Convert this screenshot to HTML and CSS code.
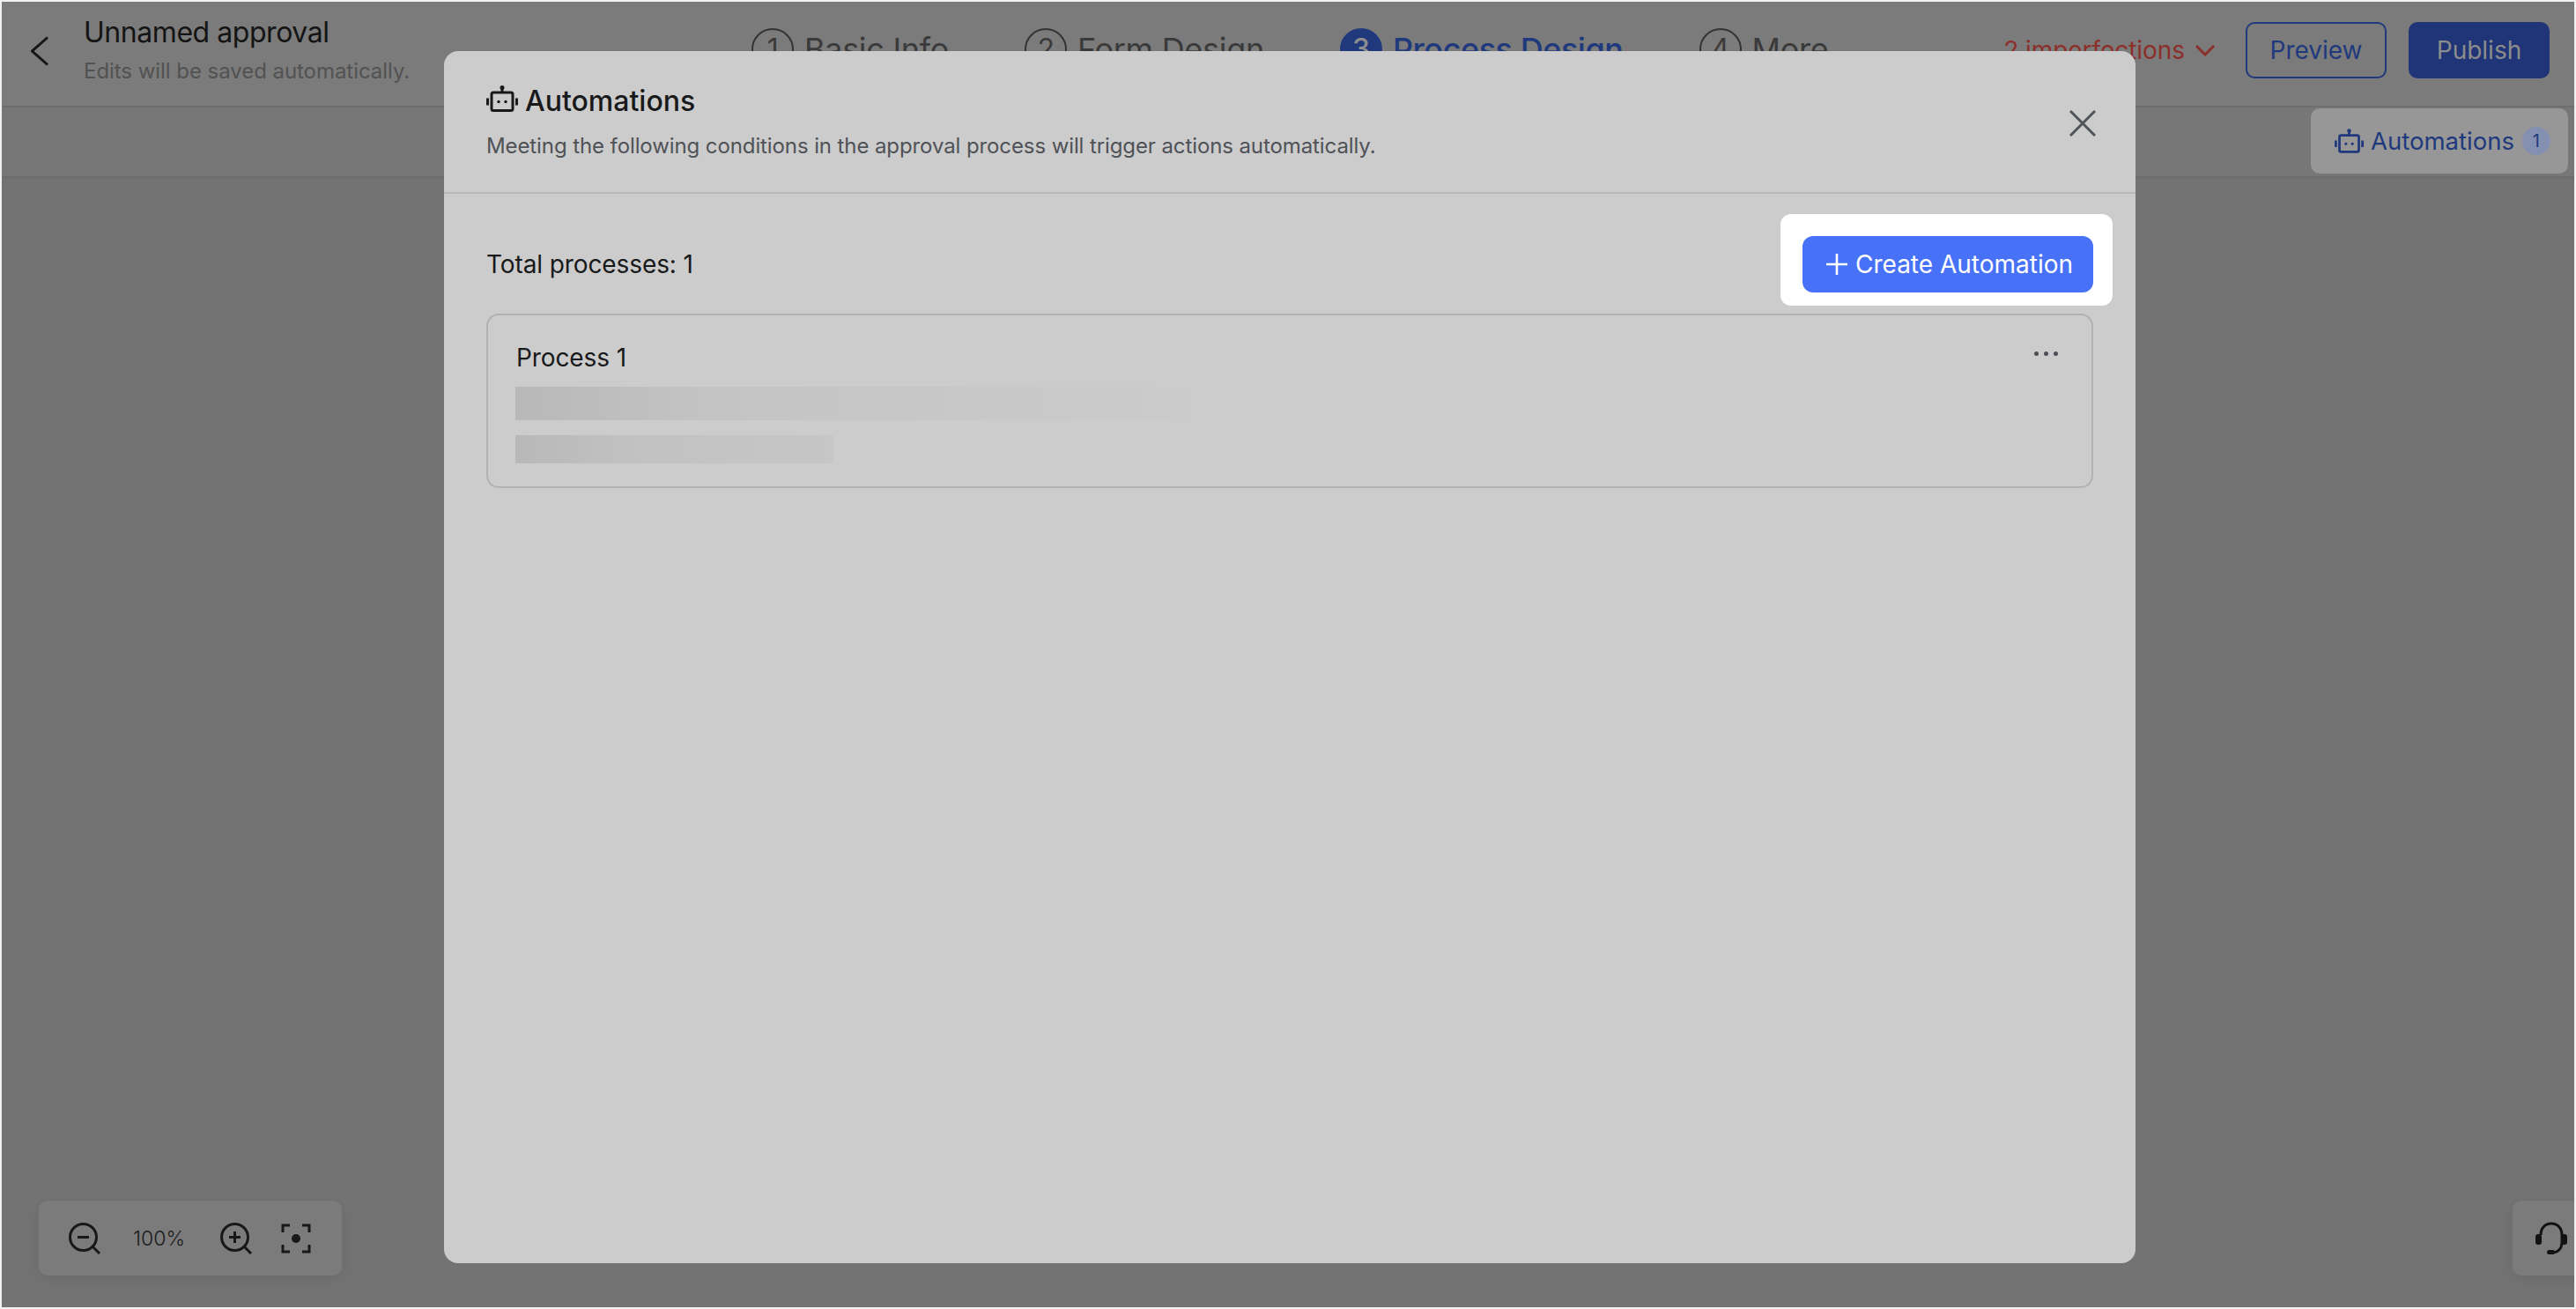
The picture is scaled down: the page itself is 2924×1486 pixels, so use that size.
FILE: index.html
```html
<!DOCTYPE html>
<html lang="en">
<head>
<meta charset="utf-8">
<title>Automations</title>
<link rel="stylesheet" href="styles.css">
</head>
<body>
<div class="app">
  <header class="topbar">
    <div class="topbar-left">
      <svg class="back" viewBox="0 0 20 34" width="20" height="34"><path d="M19 1.500 1.500 17 19 32.500" fill="none" stroke="#151515" stroke-width="3"/></svg>
      <div class="doc">
        <div class="doc-name">Unnamed approval</div>
        <div class="doc-note">Edits will be saved automatically.</div>
      </div>
    </div>
    <nav class="steps">
      <div class="step"><span class="step-num">1</span><span>Basic Info</span></div>
      <div class="step"><span class="step-num">2</span><span>Form Design</span></div>
      <div class="step step-active"><span class="step-num">3</span><span>Process Design</span></div>
      <div class="step"><span class="step-num">4</span><span>More</span></div>
    </nav>
    <div class="topbar-right">
      <div class="issues">2 imperfections
        <svg viewBox="0 0 24 14" width="24" height="14"><path d="M2 2l10 10L22 2" fill="none" stroke="#8c2f2a" stroke-width="3"/></svg>
      </div>
      <button class="btn btn-outline">Preview</button>
      <button class="btn btn-solid">Publish</button>
    </div>
  </header>
  <div class="subbar">
    <div class="auto-chip">
      <svg class="robot" viewBox="0 0 36 30" width="33" height="28"><g fill="none" stroke="#20397d" stroke-width="3"><rect x="6" y="8" width="24" height="20.500" rx="2"/><path d="M18 3v5M1.500 14.500v8M34.500 14.500v8"/></g><g fill="#20397d"><circle cx="18" cy="2.500" r="2.500"/><circle cx="14" cy="18.500" r="1.700"/><circle cx="22" cy="18.500" r="1.700"/></g></svg>
      <span class="auto-chip-label">Automations</span>
      <span class="auto-chip-badge">1</span>
    </div>
  </div>
  <main class="canvas">
    <div class="zoom-panel">
      <svg viewBox="0 0 36 36" width="36" height="36"><g fill="none" stroke="#17181a" stroke-width="3"><circle cx="16.500" cy="16.500" r="15"/><path d="M27 27l8 8M10 16.500h13"/></g></svg>
      <span class="zoom-value">100%</span>
      <svg viewBox="0 0 36 36" width="36" height="36"><g fill="none" stroke="#17181a" stroke-width="3"><circle cx="16.500" cy="16.500" r="15"/><path d="M27 27l8 8M10 16.500h13M16.500 10v13"/></g></svg>
      <svg class="fit" viewBox="0 0 34 34" width="34" height="34"><path d="M10 2H2v8M24 2h8v8M10 32H2v-8M24 32h8v-8" fill="none" stroke="#17181a" stroke-width="3"/><circle cx="17" cy="17" r="5" fill="#17181a"/></svg>
    </div>
    <div class="help-panel">
      <svg viewBox="0 0 36 38" width="36" height="38"><path d="M6 15C6 7 11 2 18 2s12 5 12 13v8c0 8-5 12-11 12" fill="none" stroke="#111213" stroke-width="3"/><rect x="0" y="14" width="7" height="12" rx="3" fill="#111213"/><rect x="29" y="14" width="7" height="12" rx="3" fill="#111213"/><rect x="13" y="32" width="9" height="5" rx="2.500" fill="#111213"/></svg>
    </div>
  </main>

  <div class="overlay">
    <section class="modal">
      <div class="modal-head">
        <div class="modal-heading">
          <h1 class="modal-title">
            <svg class="robot" viewBox="0 0 36 30" width="36" height="30"><g fill="none" stroke="#18191b" stroke-width="3"><rect x="6" y="8" width="24" height="20.500" rx="2"/><path d="M18 3v5M1.500 14.500v8M34.500 14.500v8"/></g><g fill="#18191b"><circle cx="18" cy="2.500" r="2.500"/><circle cx="14" cy="18.500" r="1.700"/><circle cx="22" cy="18.500" r="1.700"/></g></svg>
            <span class="modal-title-text">Automations</span>
          </h1>
          <p class="modal-desc">Meeting the following conditions in the approval process will trigger actions automatically.</p>
        </div>
        <svg class="close" viewBox="0 0 30 30" width="30" height="30"><path d="M1 1l28 28M29 1 1 29" fill="none" stroke="#505358" stroke-width="3"/></svg>
      </div>
      <div class="modal-body">
        <div class="list-head">
          <span class="total">Total processes: 1</span>
          <div class="spot">
            <button class="create">
              <svg viewBox="0 0 24 24" width="24" height="24"><path d="M12 0v24M0 12h24" fill="none" stroke="#fff" stroke-width="2.600"/></svg>
              Create Automation
            </button>
          </div>
        </div>
        <article class="card">
          <div class="card-name">Process 1</div>
          <div class="skeleton skeleton-long"></div>
          <div class="skeleton skeleton-short"></div>
          <div class="more"><i></i><i></i><i></i></div>
        </article>
      </div>
    </section>
  </div>
</div>
</body>
</html>
```

FILE: styles.css
```css
* { box-sizing: border-box; }
html, body { height: 100%; }
body {
  margin: 0;
  padding: 2px;
  background: #f2f2f2;
  font-family: Inter, "Noto Sans", "Liberation Sans", sans-serif;
  overflow: hidden;
}
.app {
  position: relative;
  height: 1482px;
  display: flex;
  flex-direction: column;
  overflow: hidden;
  background: #727272;
}
.topbar {
  height: 120px;
  flex: none;
  display: flex;
  background: #7b7b7b;
  border-bottom: 2px solid #6e6e6e;
  padding-right: 28px;
}
.topbar-left {
  width: 851px;
  flex: none;
  display: flex;
  align-items: flex-start;
  padding-left: 33px;
}
.back { margin-top: 39px; flex: none; }
.doc { margin-left: 40px; margin-top: 15px; }
.doc-name { font-size: 32px; line-height: 40px; color: #141414; letter-spacing: -0.45px; white-space: nowrap; }
.doc-note { font-size: 24px; line-height: 32px; margin-top: 8px; color: #525252; letter-spacing: -0.05px; white-space: nowrap; }
.steps { display: flex; gap: 86px; padding-top: 30px; align-items: flex-start; }
.step { display: flex; align-items: center; gap: 12px; font-size: 36px; line-height: 48px; color: #3a3a3a; letter-spacing: -0.3px; white-space: nowrap; }
.step-num {
  width: 48px; height: 48px; border: 2px solid #333; border-radius: 50%;
  display: flex; align-items: center; justify-content: center; font-size: 32px;
}
.step-active { color: #20397d; font-weight: 500; letter-spacing: -0.45px; }
.step-active .step-num { background: #20397d; border-color: #20397d; color: #8f8f8f; }
.topbar-right { margin-left: auto; display: flex; align-items: flex-start; padding-top: 23px; }
.issues {
  display: flex; align-items: center; gap: 11px; height: 64px;
  font-size: 28px; color: #8c2f2a; margin-right: 34px; letter-spacing: -0.05px; white-space: nowrap;
}
.btn {
  height: 64px; width: 160px; border-radius: 10px; font: inherit; font-size: 28px; padding: 0;
}
.btn-outline { background: transparent; border: 2px solid #20397d; color: #20397d; }
.btn-solid { background: #1f3577; border: 0; color: #8c8c8c; margin-left: 25px; }
.subbar {
  height: 80px;
  flex: none;
  display: flex;
  justify-content: flex-end;
  padding: 1px 7px 0 0;
  background: #777;
  border-bottom: 2px solid #6c6c6c;
}
.auto-chip {
  width: 292px; height: 74px; border-radius: 10px; background: #979797;
  display: flex; align-items: center; padding-left: 27px; color: #20397d;
}
.auto-chip-label { margin-left: 8px; font-size: 27.500px; }
.auto-chip-badge {
  margin-left: 9px; width: 32px; height: 32px; border-radius: 50%; background: #8490b1;
  display: flex; align-items: center; justify-content: center; font-size: 20px;
}
.canvas { position: relative; flex: 1; background: linear-gradient(#727272, #737373); }
.zoom-panel {
  position: absolute; left: 42px; bottom: 36px; width: 344px; height: 85px;
  border-radius: 10px; background: #7b7b7b; box-shadow: 0 4px 16px rgba(0,0,0,.08);
  display: flex; align-items: center; padding-left: 34px;
}
.zoom-value { width: 136px; font-size: 23px; font-weight: 300; color: #1c1c1c; padding-left: 37px; flex: none; }
.fit { margin-left: 33px; }
.help-panel {
  position: absolute; right: -60px; bottom: 36px; width: 130px; height: 85px;
  border-radius: 10px; background: #7b7b7b; box-shadow: 0 4px 16px rgba(0,0,0,.08);
  display: flex; align-items: center; padding-left: 26px;
}
.overlay {
  position: absolute; inset: 0;
  display: flex; justify-content: center; align-items: flex-start;
  padding: 56px 0 0 4px;
}
.modal {
  width: 1920px; height: 1376px; border-radius: 16px; background: #ccc;
  display: flex; flex-direction: column;
}
.modal-head {
  height: 162px; flex: none; border-bottom: 2px solid #b8b8b8;
  display: flex; justify-content: space-between; padding: 39px 45px 0 48px;
}
.modal-title {
  margin: 0; display: flex; align-items: flex-start; gap: 8px;
  font-size: 32px; line-height: 30px; font-weight: 500; color: #18191b;
}
.modal-title-text { margin-top: 3px; }
.modal-desc { margin: 20px 0 0; font-size: 24px; line-height: 32px; color: #4f5257; letter-spacing: -0.1px; white-space: nowrap; }
.close { margin-top: 28px; flex: none; }
.modal-body { padding: 48px 48px 0; }
.list-head { display: flex; justify-content: space-between; align-items: center; margin-bottom: 24px; }
.total { font-size: 28px; color: #18191b; letter-spacing: -0.1px; }
.spot {
  padding: 25px 22px 15px 25px; margin: -25px -22px -15px -25px;
  background: #fff; border-radius: 12px;
}
.create {
  width: 330px; height: 64px; border: 0; border-radius: 12px; background: #4772f7; color: #fff;
  font: inherit; font-size: 28px; display: flex; align-items: center; gap: 9px; padding: 0 0 0 27px;
  white-space: nowrap;
}
.card {
  position: relative; height: 198px; border: 2px solid #b2b2b2; border-radius: 14px;
  padding: 28px 32px 0 31px;
}
.card-name { font-size: 28px; line-height: 40px; color: #18191b; padding-left: 1px; letter-spacing: -0.1px; }
.skeleton { background: linear-gradient(90deg, #b8b8b8, #c4c4c4 30%, #c8c8c8 70%, #cbcbcb); }
.skeleton-long { width: 765px; height: 38px; margin-top: 13px; }
.skeleton-short { width: 361px; height: 32px; margin-top: 17px; background: linear-gradient(90deg, #b8b8b8, #c2c2c2 40%, #c6c6c6); }
.more { position: absolute; top: 41px; right: 38px; display: flex; gap: 6px; }
.more i { width: 5px; height: 5px; border-radius: 50%; background: #4c4f55; }
```
